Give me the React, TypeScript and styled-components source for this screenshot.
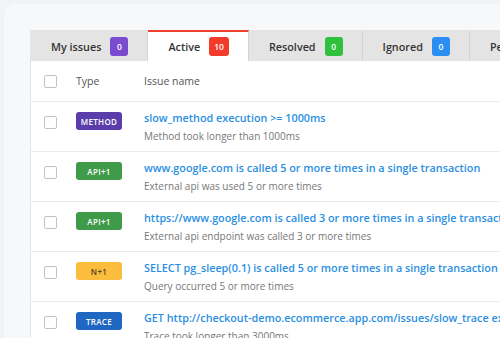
import React from "react";
import styled, { createGlobalStyle } from "styled-components";

type TTab = { label: string; count: number; color: string; active?: boolean };
type TIssue = {
  type: string;
  bg: string;
  fg?: string;
  title: string;
  desc: string;
};

const tabs: TTab[] = [
  { label: "My issues", count: 0, color: "#7a4bcf" },
  { label: "Active", count: 10, color: "#f23b2b", active: true },
  { label: "Resolved", count: 0, color: "#2fc13c" },
  { label: "Ignored", count: 0, color: "#2b8ef2" },
  { label: "Performance", count: 0, color: "#f5a623" },
];

const issues: TIssue[] = [
  {
    type: "METHOD",
    bg: "#5a3dab",
    title: "slow_method execution >= 1000ms",
    desc: "Method took longer than 1000ms",
  },
  {
    type: "API+1",
    bg: "#3f9b4a",
    title: "www.google.com is called 5 or more times in a single transaction",
    desc: "External api was used 5 or more times",
  },
  {
    type: "API+1",
    bg: "#3f9b4a",
    title: "https://www.google.com is called 3 or more times in a single transaction",
    desc: "External api endpoint was called 3 or more times",
  },
  {
    type: "N+1",
    bg: "#fbbd3e",
    fg: "#5b4712",
    title: "SELECT pg_sleep(0.1) is called 5 or more times in a single transaction",
    desc: "Query occurred 5 or more times",
  },
  {
    type: "TRACE",
    bg: "#1f67c2",
    title: "GET http://checkout-demo.ecommerce.app.com/issues/slow_trace execution >= 3000ms",
    desc: "Trace took longer than 3000ms",
  },
];

export default function App() {
  return (
    <>
      <GlobalStyle />
      <Panel>
        <Table>
          <TabBar>
            {tabs.map((tab) => (
              <Tab key={tab.label} active={tab.active}>
                {tab.label}
                <Count color={tab.color}>{tab.count}</Count>
              </Tab>
            ))}
          </TabBar>
          <HeadRow>
            <CheckCell>
              <Checkbox />
            </CheckCell>
            <TypeCell>Type</TypeCell>
            <NameCell>Issue name</NameCell>
          </HeadRow>
          {issues.map((issue, index) => (
            <Row key={index}>
              <CheckCell>
                <Checkbox offset />
              </CheckCell>
              <TypeCell>
                <TypeBadge bg={issue.bg} fg={issue.fg}>
                  {issue.type}
                </TypeBadge>
              </TypeCell>
              <NameCell>
                <Title>{issue.title}</Title>
                <Desc>{issue.desc}</Desc>
              </NameCell>
            </Row>
          ))}
        </Table>
      </Panel>
    </>
  );
}

const GlobalStyle = createGlobalStyle`
  html, body {
    margin: 0;
    padding: 0;
    background: #f2f3f5;
    overflow: hidden;
    font-family: "Open Sans", "Noto Sans", sans-serif;
  }
`;

const Panel = styled.div`
  margin: 4px 0 0 4px;
  padding: 26px 0 0 26px;
  width: 760px;
  height: 400px;
  background: #f7f8fa;
  border-radius: 12px;
`;

const Table = styled.div`
  background: #fff;
  border-left: 1px solid #e4e4e4;
`;

const TabBar = styled.div`
  display: flex;
  height: 31px;
  background: #e4e4e4;
`;

const Tab = styled.div<{ active?: boolean }>`
  display: flex;
  align-items: center;
  gap: 9px;
  padding: 0 19px 0 20px;
  box-sizing: border-box;
  font-size: 10.8px;
  font-weight: 600;
  color: #333;
  white-space: nowrap;
  border-right: 1px solid #d4d4d4;
  background: ${({ active }) => (active ? "#fff" : "#e4e4e4")};
  border-top: 2px solid ${({ active }) => (active ? "#f0402f" : "transparent")};
`;

const Count = styled.span<{ color: string }>`
  display: inline-flex;
  align-items: center;
  justify-content: center;
  min-width: 18px;
  height: 19px;
  padding: 0 5px;
  box-sizing: border-box;
  border-radius: 3px;
  background: ${({ color }) => color};
  color: #fff;
  font-size: 8.5px;
  font-weight: 600;
`;

const HeadRow = styled.div`
  display: flex;
  align-items: center;
  height: 40px;
  border-bottom: 1px solid #ebebeb;
  font-size: 10.5px;
  font-weight: 500;
  color: #555;
`;

const Row = styled.div`
  display: flex;
  align-items: flex-start;
  padding-top: 7px;
  height: 42px;
  border-bottom: 1px solid #ebebeb;
`;

const CheckCell = styled.div`
  width: 45px;
  flex: none;
  padding-left: 13px;
  box-sizing: border-box;
`;

const TypeCell = styled.div`
  width: 68px;
  flex: none;
`;

const NameCell = styled.div`
  flex: 1;
  min-width: 0;
  overflow: hidden;
`;

const Checkbox = styled.div<{ offset?: boolean }>`
  width: 13px;
  height: 13px;
  box-sizing: border-box;
  border: 1.5px solid #c2c2c2;
  border-radius: 2px;
  background: #fff;
  margin-top: ${({ offset }) => (offset ? "7px" : "0")};
`;

const TypeBadge = styled.div<{ bg: string; fg?: string }>`
  display: flex;
  align-items: center;
  justify-content: center;
  width: 46px;
  height: 18px;
  margin-top: 3px;
  border-radius: 3px;
  background: ${({ bg }) => bg};
  color: ${({ fg }) => fg || "#fff"};
  font-size: 8px;
  font-weight: 600;
  letter-spacing: 0.3px;
`;

const Title = styled.div`
  font-size: 10.8px;
  line-height: 18px;
  font-weight: 600;
  color: #2a8fe2;
  white-space: nowrap;
`;

const Desc = styled.div`
  font-size: 10px;
  line-height: 18px;
  color: #777;
  white-space: nowrap;
`;
